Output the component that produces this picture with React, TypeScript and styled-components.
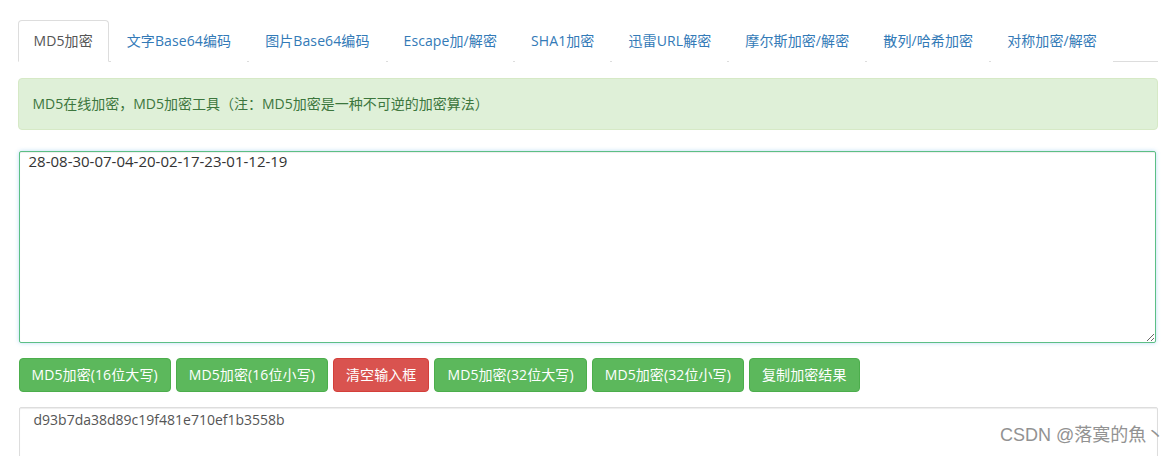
import styled, { createGlobalStyle } from "styled-components";

const GlobalStyle = createGlobalStyle`
  html, body {
    margin: 0;
    padding: 0;
    background: #fff;
    overflow: hidden;
  }
  body {
    font-family: "Open Sans", "Noto Sans CJK SC", sans-serif;
    font-size: 14px;
    line-height: 20px;
    color: #333;
  }
`;

const tabs = [
  "MD5加密",
  "文字Base64编码",
  "图片Base64编码",
  "Escape加/解密",
  "SHA1加密",
  "迅雷URL解密",
  "摩尔斯加密/解密",
  "散列/哈希加密",
  "对称加密/解密",
];

const buttons: { label: string; danger?: boolean }[] = [
  { label: "MD5加密(16位大写)" },
  { label: "MD5加密(16位小写)" },
  { label: "清空输入框", danger: true },
  { label: "MD5加密(32位大写)" },
  { label: "MD5加密(32位小写)" },
  { label: "复制加密结果" },
];

export default function App() {
  return (
    <>
      <GlobalStyle />
      <Container>
        <TabList>
          {tabs.map((t, i) => (
            <TabItem key={t}>
              <TabLink $active={i === 0}>{t}</TabLink>
            </TabItem>
          ))}
        </TabList>

        <Alert>MD5在线加密，MD5加密工具（注：MD5加密是一种不可逆的加密算法）</Alert>

        <InputArea defaultValue="28-08-30-07-04-20-02-17-23-01-12-19" />

        <ButtonRow>
          {buttons.map((b) => (
            <Button key={b.label} $danger={b.danger}>
              {b.label}
            </Button>
          ))}
        </ButtonRow>

        <OutputArea defaultValue="d93b7da38d89c19f481e710ef1b3558b" readOnly />
      </Container>
      <Watermark>CSDN @落寞的魚丶</Watermark>
    </>
  );
}

const Container = styled.div`
  width: 1140px;
  margin: 0 auto;
  padding: 20px 15px 0;
`;

const TabList = styled.ul`
  display: flex;
  margin: 0;
  padding: 0;
  list-style: none;
  border-bottom: 1px solid #ddd;
`;

const TabItem = styled.li`
  margin-bottom: -1px;
  margin-right: 2px;
`;

const TabLink = styled.a<{ $active?: boolean }>`
  display: block;
  padding: 10px 15px;
  line-height: 20px;
  letter-spacing: 0.1px;
  border: 1px solid ${(p) => (p.$active ? "#ddd" : "transparent")};
  border-bottom-color: ${(p) => (p.$active ? "#fff" : "transparent")};
  border-radius: 4px 4px 0 0;
  background: #fff;
  color: ${(p) => (p.$active ? "#555" : "#337ab7")};
  cursor: pointer;
`;

const Alert = styled.div`
  margin: 16px 0 21px;
  padding: 15px 14px;
  background: #dff0d8;
  border: 1px solid #d6e9c6;
  border-radius: 4px;
  color: #3c763d;
`;

const InputArea = styled.textarea`
  display: block;
  box-sizing: border-box;
  width: 1137px;
  height: 192px;
  margin: 0 0 0 1px;
  padding: 0 9px;
  font-family: "Open Sans", "Noto Sans CJK SC", sans-serif;
  font-size: 15px;
  line-height: 19px;
  color: #333;
  border: 1px solid #5cbf85;
  border-radius: 2px;
  outline: none;
  box-shadow: inset 0 1px 1px rgba(0, 0, 0, 0.075), 0 0 4px rgba(102, 175, 233, 0.45);
`;

const ButtonRow = styled.div`
  display: flex;
  gap: 5px;
  margin: 15px 0 15px 1px;
`;

const Button = styled.button<{ $danger?: boolean }>`
  padding: 6px 12px;
  font-family: "Open Sans", "Noto Sans CJK SC", sans-serif;
  font-size: 14px;
  line-height: 20px;
  letter-spacing: 0.1px;
  color: #fff;
  background: ${(p) => (p.$danger ? "#d9534f" : "#5cb85c")};
  border: 1px solid ${(p) => (p.$danger ? "#d43f3a" : "#4cae4c")};
  border-radius: 4px;
  cursor: pointer;
`;

const OutputArea = styled.textarea`
  display: block;
  box-sizing: border-box;
  width: 1139px;
  height: 80px;
  margin: 0 0 0 1px;
  padding: 2px 14px;
  font-family: "Open Sans", "Noto Sans CJK SC", sans-serif;
  font-size: 14px;
  line-height: 20px;
  color: #555;
  border: 1px solid #ddd;
  border-radius: 2px;
  outline: none;
  resize: none;
  box-shadow: inset 0 1px 1px rgba(0, 0, 0, 0.075);
`;

const Watermark = styled.div`
  position: absolute;
  left: 1000px;
  top: 423px;
  white-space: nowrap;
  font-family: "Liberation Sans", "Noto Sans CJK SC", sans-serif;
  font-size: 18px;
  line-height: 24px;
  color: #929292;
  pointer-events: none;
`;
